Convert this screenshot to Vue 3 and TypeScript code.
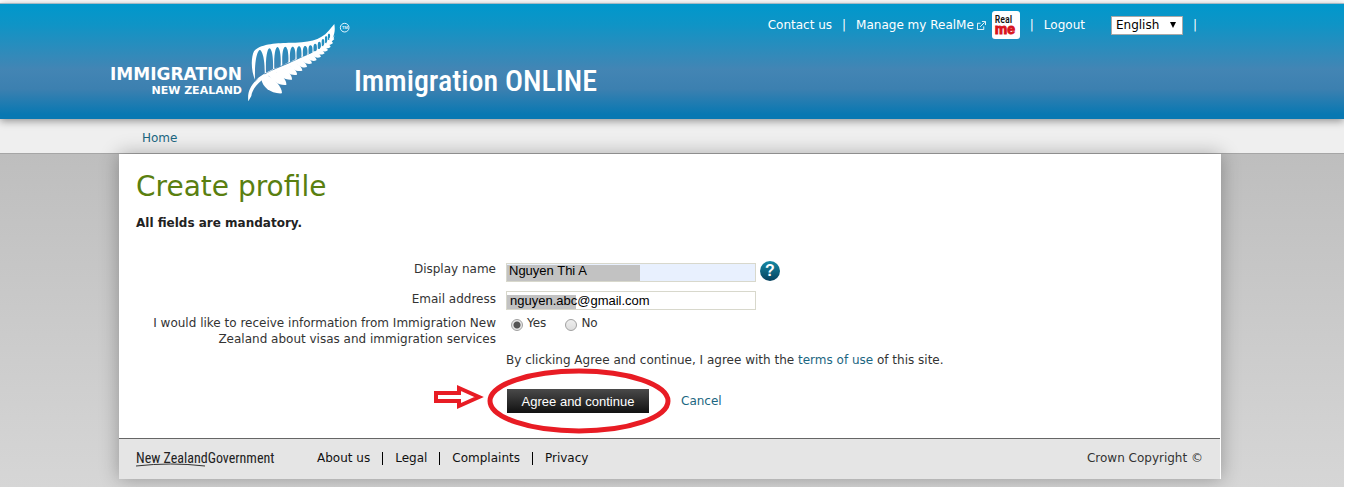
<script setup lang="ts">
import { ref } from 'vue'

const language = ref('English')
const displayName = ref('Nguyen Thi A')
const email = ref('nguyen.abc@gmail.com')
const newsletter = ref('yes')
const footerLinks: string[] = ['About us', 'Legal', 'Complaints', 'Privacy']

// Openings between the upper fronds: left, right, top, bottom
const openings: number[][] = [
  [45, 74, 90, 182],
  [78, 99, 85, 160],
  [103, 122, 81, 147],
  [127, 145, 80, 136],
  [150, 166, 80, 126],
  [170, 184, 79, 118],
  [189, 202, 78, 110],
  [206, 217, 76, 103],
  [221, 230, 71, 97],
  [234, 242, 65, 91],
  [246, 252, 57, 82],
  [256, 261, 49, 72],
  [265, 269, 41, 63],
]
const fronds = openings
  .map(([l, r, t, b]) => {
    const mid = (l + r) / 2
    const shoulder = t + (b - t) * 0.2
    return `M${l} ${b}C${l - 2} ${shoulder} ${mid - 4} ${t} ${mid} ${t}C${mid + 4} ${t} ${r + 2} ${shoulder} ${r} ${b - (r - l) * 0.5}Z`
  })
  .join('')
const frond = 'M46 182C32 150 33 112 42 94C58 72 105 70 145 68C205 68 240 62 266 32L283 12C288 40 278 60 262 72C235 94 200 104 160 122C120 138 70 156 46 182Z' + fronds
</script>

<template>
  <div class="page">
    <header class="banner">
      <div class="wrap banner-row">
        <div class="brand">
          <svg class="logo" viewBox="0 0 246 82" role="img" aria-label="Immigration New Zealand">
            <g class="logo-text">
              <text x="132" y="58" class="logo-main">IMMIGRATION</text>
              <text x="132" y="72" class="logo-sub">NEW ZEALAND</text>
            </g>
            <g transform="translate(130 -2) scale(0.333333)" fill="#fff">
              <path fill-rule="evenodd" :d="frond" />
              <path d="M25 244C21 214 34 192 58 173C92 150 130 138 170 119C210 102 245 88 264 70L284 46C276 72 254 92 226 107C190 128 130 142 80 170C50 190 36 210 34 228Z" />
              <path d="M64 178C68 202 92 222 126 220C126 200 104 178 82 166Z" />
              <path d="M84 165C96 180 116 198 139 195C141 180 122 160 104 154Z" />
              <path d="M106 153C116 167 136 182 156 179C157 166 140 148 122 145Z" />
              <path d="M126 143C135 156 154 168 171 164C172 153 156 138 141 136Z" />
              <path d="M146 134C154 146 171 157 187 152C186 141 172 129 159 127Z" />
              <path d="M165 125C172 136 187 146 201 141C200 131 188 120 177 118Z" />
              <path d="M182 117C189 127 203 136 216 130C214 120 203 111 194 110Z" />
              <path d="M198 110C205 119 218 127 230 120C227 111 217 103 209 102Z" />
              <path d="M213 103C219 110 231 117 243 110C239 101 230 95 222 94Z" />
              <path d="M227 95C232 102 244 108 254 100C250 92 241 87 234 86Z" />
              <path d="M239 87C244 94 254 98 264 90C260 83 252 78 245 78Z" />
              <path d="M249 79C254 85 264 88 272 80C268 73 261 69 255 69Z" />
              <path d="M259 69C263 75 271 77 279 69C275 62 269 59 264 60Z" />
              <path d="M267 57C270 63 277 65 283 57L272 48Z" />
              <circle cx="314" cy="23" r="13" fill="none" stroke="#e3f5ff" stroke-width="3" />
            </g>
            <text x="232" y="7" class="logo-mark">TM</text>
          </svg>
          <span class="product">Immigration ONLINE</span>
        </div>
        <nav class="tools" aria-label="Account">
          <a href="#contact">Contact us</a>
          <span class="bar">|</span>
          <a href="#realme" class="realme">Manage my RealMe
            <svg class="external" viewBox="0 0 10 10" fill="none" stroke="currentColor" aria-hidden="true">
              <path d="M4 2.5H.5v7h7V6M3.5 6.5l5-5M5.5.5h4v4" />
            </svg>
            <span class="badge"><span class="badge-real">Real</span><span class="badge-me">me</span></span>
          </a>
          <span class="bar">|</span>
          <a href="#logout">Logout</a>
          <span class="language">
            <select v-model="language" aria-label="Language">
              <option>English</option>
            </select>
            <svg viewBox="0 0 6 6" aria-hidden="true"><path d="M0 0h6L3 6z" /></svg>
          </span>
          <span class="bar">|</span>
        </nav>
      </div>
    </header>

    <nav class="crumbs" aria-label="Breadcrumb">
      <div class="wrap"><a href="#home">Home</a></div>
    </nav>

    <div class="body">
      <div class="wrap card">
        <main class="content">
          <h1>Create profile</h1>
          <p class="note">All fields are mandatory.</p>
          <form class="form" @submit.prevent>
            <label class="caption" for="display-name">Display name</label>
            <div class="field">
              <input id="display-name" v-model="displayName" class="text name" type="text" />
              <button type="button" class="help" aria-label="Help">?</button>
            </div>

            <label class="caption" for="email">Email address</label>
            <div class="field compact">
              <input id="email" v-model="email" class="text email" type="text" />
            </div>

            <span id="news" class="caption">I would like to receive information from Immigration New Zealand about visas and immigration services</span>
            <div class="choices" role="radiogroup" aria-labelledby="news">
              <label><input v-model="newsletter" type="radio" name="news" value="yes" />Yes</label>
              <label><input v-model="newsletter" type="radio" name="news" value="no" />No</label>
            </div>

            <p class="terms">By clicking Agree and continue, I agree with the <a href="#terms">terms of use</a> of this site.</p>

            <div class="actions">
              <button type="submit" class="agree">Agree and continue</button>
              <a href="#cancel">Cancel</a>
              <svg class="callout" viewBox="0 0 240 66" fill="none" stroke="#e81c24" aria-hidden="true">
                <path stroke-width="4" d="M4 25H27V20L47 29L27 38V33H4Z" />
                <ellipse cx="147" cy="33" rx="89" ry="30" stroke-width="5" />
              </svg>
            </div>
          </form>
        </main>

        <footer class="footer">
          <div class="government">
            <span>New Zealand</span><span>Government</span>
            <svg viewBox="0 0 70 4" fill="none" stroke="#333" aria-hidden="true"><path d="M0 3Q35-1 69 3" /></svg>
          </div>
          <ul>
            <li v-for="link in footerLinks" :key="link"><a :href="'#' + link">{{ link }}</a></li>
          </ul>
          <span class="copyright">Crown Copyright ©</span>
        </footer>
      </div>
    </div>
  </div>
</template>

<style>
body {
  background: #fff;
}
</style>

<style scoped>
* {
  box-sizing: border-box;
}
.page {
  margin-right: 1px;
  padding-top: 3px;
  overflow: hidden;
  font: 12px/16px "DejaVu Sans", Verdana, sans-serif;
  color: #333;
}
.wrap {
  width: calc(100% - 242px);
  min-width: 900px;
  margin: 0 auto;
  position: relative;
  right: 2px;
}
a {
  color: #1b6681;
  text-decoration: none;
}
.banner {
  position: relative;
  z-index: 1;
  height: 116px;
  border-top: 1px solid #a5b9c4;
  background: linear-gradient(#0098cc, #0f94c6 18%, #4385b4 57%, #3c80b0 74%, #0878b2 96%);
  box-shadow: 0 2px 8px rgba(0, 0, 0, 0.4);
}
.banner-row {
  display: flex;
  justify-content: space-between;
}
.brand {
  display: flex;
  margin-left: -9px;
  padding-top: 18px;
}
.logo {
  width: 246px;
  height: 82px;
  margin-right: -2px;
}
.logo-text {
  fill: #fff;
  text-anchor: end;
  font-family: "DejaVu Sans", sans-serif;
  font-weight: 700;
}
.logo-main {
  font-size: 17px;
}
.logo-sub {
  font-size: 11px;
}
.logo-mark {
  fill: #e3f5ff;
  font: 700 4px "Liberation Sans", sans-serif;
}
.product {
  margin-top: 39px;
  font: 500 30px/40px "Roboto Condensed", sans-serif;
  color: #fff;
  white-space: nowrap;
}
.tools {
  display: flex;
  align-items: center;
  height: 28px;
  margin: 7px 24px 0 0;
  gap: 10px;
  white-space: nowrap;
  color: #fff;
}
.tools a {
  color: #fff;
}
.realme {
  display: flex;
  align-items: center;
  gap: 3px;
}
.external {
  width: 9px;
  height: 9px;
}
.badge {
  display: flex;
  flex-direction: column;
  width: 28px;
  height: 28px;
  margin-left: 3px;
  padding: 4px 3px;
  border-radius: 3px;
  background: #fff;
}
.badge-real {
  font: 500 10px/9px "Roboto Condensed", sans-serif;
  color: #111;
}
.badge-me {
  font: 700 14px/10px "Liberation Sans", sans-serif;
  color: #d9141c;
  -webkit-text-stroke: 1px #d9141c;
}
.language {
  position: relative;
  margin-left: 16px;
}
.language select {
  appearance: none;
  display: block;
  width: 72px;
  height: 19px;
  padding: 0 4px;
  border: 1px solid #a9a9a9;
  border-radius: 0;
  background: #fff;
  color: #000;
  font: inherit;
}
.language svg {
  position: absolute;
  right: 7px;
  top: 6px;
  width: 6px;
  height: 6px;
  pointer-events: none;
}
.crumbs {
  height: 34px;
  padding-top: 11px;
  background: #efefef;
}
.crumbs a {
  margin-left: 23px;
}
.body {
  min-height: 334px;
  padding-bottom: 8px;
  border-top: 1px solid #a6a6a6;
  background: linear-gradient(#bebebe, #d6d6d6);
}
.card {
  border: solid #fff;
  border-width: 0 1px 0 0;
  background: #fff;
  box-shadow: 0 0 18px rgba(0, 0, 0, 0.3);
}
.content {
  padding: 16px 17px 25px;
}
h1 {
  margin: 0;
  font-size: 28px;
  line-height: 34px;
  font-weight: 400;
  color: #5a7f10;
}
.note {
  margin: 11px 0 30px;
  font-weight: 700;
  color: #222;
}
.form {
  display: grid;
  grid-template-columns: 360px 1fr;
  column-gap: 10px;
}
.caption {
  text-align: right;
}
.field {
  display: flex;
  align-items: flex-start;
  gap: 4px;
  height: 30px;
}
.compact {
  height: 24px;
}
.text {
  width: 250px;
  height: 19px;
  margin-top: 2px;
  padding: 0 2px 4px;
  border: 1px solid #d8d8cc;
  font: 13px "Liberation Sans", Arial, sans-serif;
  color: #000;
}
.name {
  background: linear-gradient(#c2c2c2, #c2c2c2) 0 1px / 133px 16px no-repeat #e8f0fe;
}
.email {
  margin-top: 0;
  padding: 0 3px;
  background: linear-gradient(#c2c2c2, #c2c2c2) 0 3px / 69px 14px no-repeat #fff;
}
.help {
  width: 20px;
  height: 20px;
  padding: 0;
  border: 0;
  border-radius: 50%;
  background: linear-gradient(#168aa5, #06425f);
  color: #fff;
  font: 700 16px/20px "Liberation Sans", sans-serif;
}
.choices {
  display: flex;
  gap: 19px;
  padding-left: 5px;
}
.choices label {
  display: flex;
  height: 16px;
  gap: 4px;
}
.choices input {
  appearance: none;
  width: 12px;
  height: 12px;
  margin: 4px 0 0;
  border: 1px solid #a0a0a0;
  border-radius: 50%;
  background: linear-gradient(#eee, #ddd);
}
.choices input:checked {
  background: radial-gradient(circle, #555 3px, #e6e6e6 4px);
}
.terms,
.actions {
  grid-column: 2;
}
.terms {
  margin: 5px 0 21px;
}
.actions {
  position: relative;
  display: flex;
  align-items: center;
  gap: 32px;
}
.agree {
  width: 142px;
  height: 24px;
  margin-left: 1px;
  padding: 0;
  border: 0;
  background: linear-gradient(#4a4a4a, #111);
  color: #fff;
  font: 13px "Liberation Sans", Arial, sans-serif;
}
.callout {
  position: absolute;
  left: -74px;
  top: -21px;
  width: 240px;
  height: 66px;
  pointer-events: none;
}
.footer {
  display: flex;
  align-items: center;
  height: 41px;
  padding: 0 17px 2px;
  border-top: 1px solid #666;
  background: #e5e5e5;
}
.government {
  position: relative;
  display: flex;
  width: 138px;
  font: 14px/16px "Roboto Condensed", sans-serif;
  color: #222;
  white-space: nowrap;
}
.government svg {
  position: absolute;
  left: 0;
  top: 13px;
  width: 70px;
  height: 4px;
}
.footer ul {
  display: flex;
  margin: 0 0 0 43px;
  padding: 0;
  list-style: none;
}
.footer li {
  display: flex;
  align-items: center;
}
.footer li + li::before {
  content: "";
  width: 1px;
  height: 13px;
  margin: 0 12px;
  background: #000;
}
.footer li a {
  color: #111;
}
.copyright {
  margin-left: auto;
}
</style>
